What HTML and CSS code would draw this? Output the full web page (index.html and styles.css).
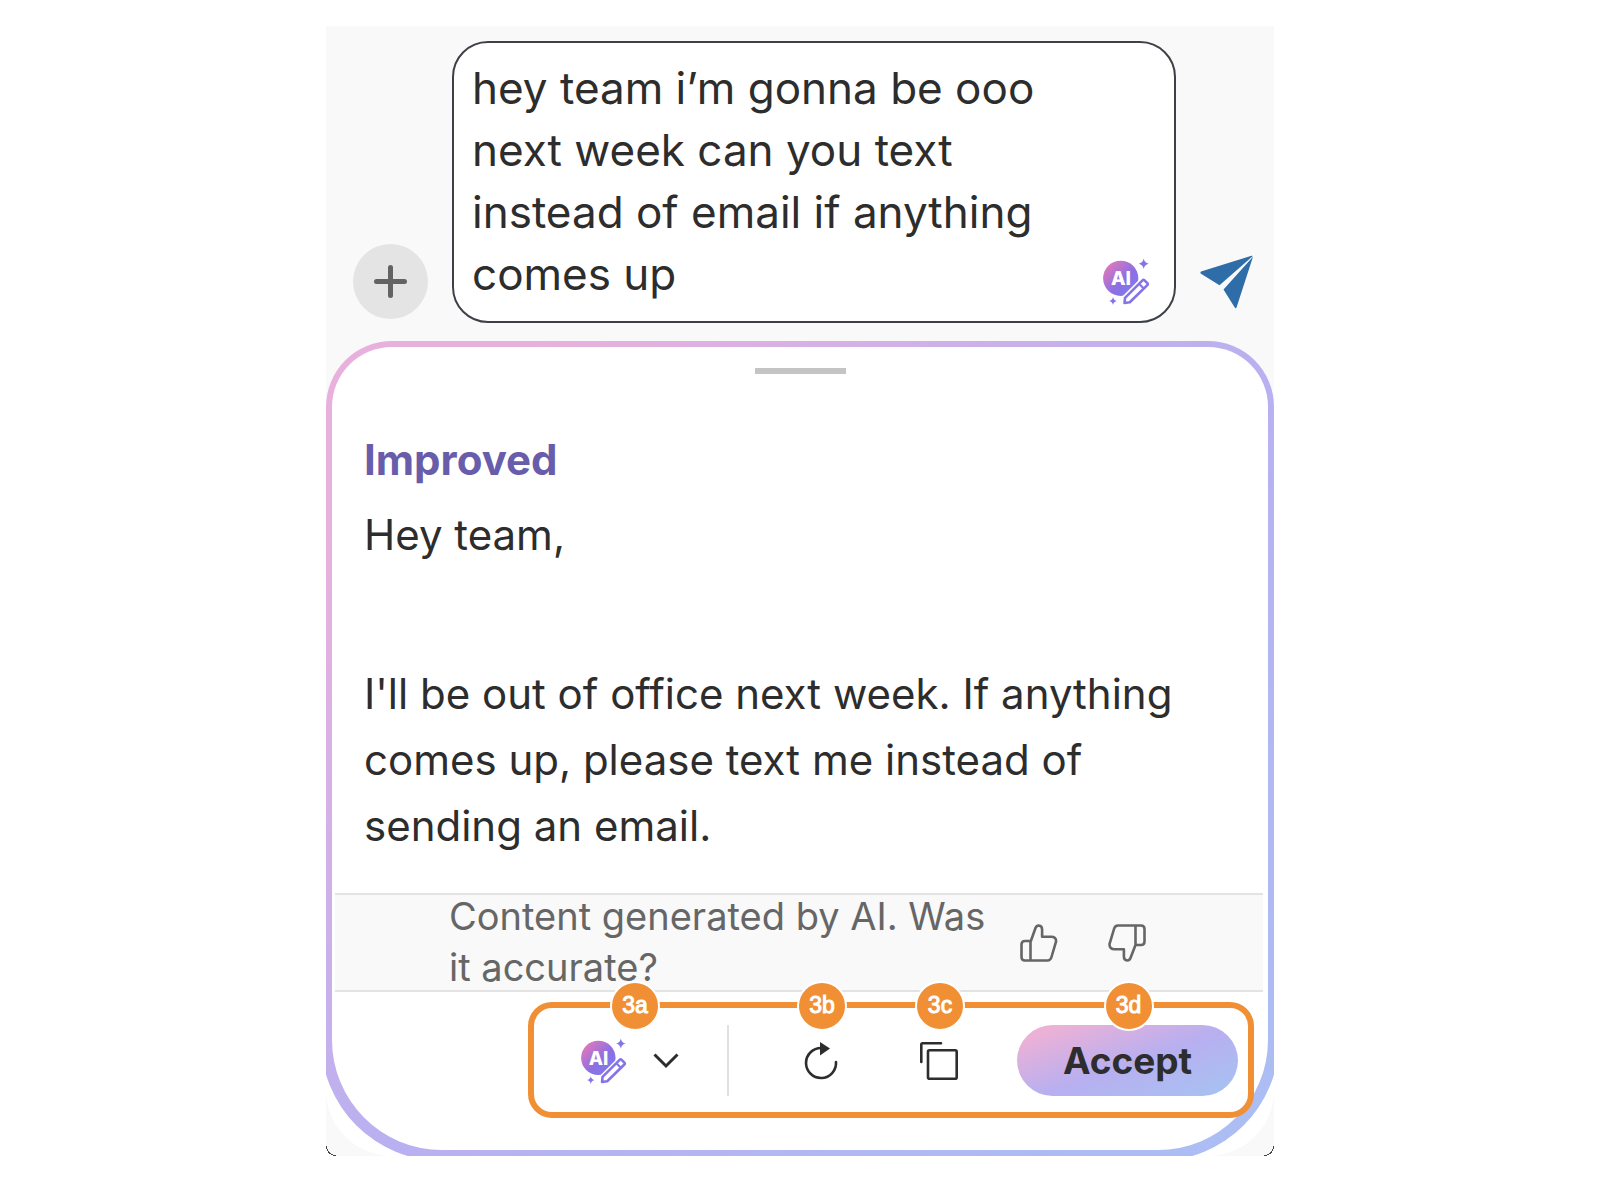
FILE: index.html
```html
<!DOCTYPE html>
<html lang="en">
<head>
    <meta charset="UTF-8">
    <title>AI Message Assistant</title>
    <link rel="stylesheet" href="styles.css">
</head>
<body>
    <!-- shared icon shapes -->
    <svg class="defs" width="0" height="0" aria-hidden="true">
        <defs>
            <linearGradient id="ai-gradient" gradientUnits="userSpaceOnUse" x1="4" y1="8" x2="32" y2="36">
                <stop offset="0" stop-color="#dc78bd"/>
                <stop offset="0.55" stop-color="#8d6fe3"/>
                <stop offset="1" stop-color="#7b7cf0"/>
            </linearGradient>
            <symbol id="ai-icon" viewBox="0 0 47 47">
                <circle cx="17.7" cy="20.3" r="17.6" fill="url(#ai-gradient)"/>
                <path d="M22 39.8 39.5 22.3q1-1 2 0l2.8 2.8q1 1 0 2L26.8 44.2l-5.3.8z" fill="#fff" stroke="#fff" stroke-width="5.5" stroke-linejoin="round"/>
                <text class="ai-text" x="18" y="27.2" text-anchor="middle">AI</text>
                <path d="M22 39.8 39.5 22.3q1-1 2 0l2.8 2.8q1 1 0 2L26.8 44.2l-5.3.8z" fill="#fff" stroke="#8574e8" stroke-width="2.6" stroke-linejoin="round"/>
                <path d="M35.8 25.5l5.2 5.2" stroke="#8574e8" stroke-width="2.2" fill="none"/>
                <path d="M40.7.5q.8 4.4 5 5.2-4.2.8-5 5.2-.8-4.4-5-5.2 4.2-.8 5-5.2z" fill="#8574e8"/>
                <path d="M10 39q.6 3.3 4 4-3.4.7-4 4-.6-3.3-4-4 3.4-.7 4-4z" fill="#8574e8"/>
            </symbol>
        </defs>
    </svg>

    <main class="card">
        <form class="composer">
            <button type="button" class="add-button" aria-label="Add attachment">
                <svg width="33" height="33" viewBox="0 0 33 33"><path d="M16.5 2.5v28M2.5 16.5h28" stroke="#636363" stroke-width="5" stroke-linecap="round"/></svg>
            </button>
            <div class="message-box">
                <textarea class="message" rows="4" aria-label="Message">hey team i’m gonna be ooo next week can you text instead of email if anything comes up</textarea>
                <button type="button" class="ai-button" aria-label="Rewrite with AI">
                    <svg width="47" height="47"><use href="#ai-icon"/></svg>
                </button>
            </div>
            <button type="submit" class="send-button" aria-label="Send">
                <svg width="54" height="54" viewBox="0 0 54 54"><path d="M1 16.6 51.5.8q1.5-.2.8.8L19.5 30.2 1 18.8q-1.2-1.2 0-2.2zM53 1.8 36.6 52.3q-.9 1.8-2 0L23.5 34.6z" fill="#2e6da8"/></svg>
            </button>
        </form>

        <section class="sheet">
            <div class="sheet-frame">
                <div class="sheet-body">
                    <div class="handle"></div>
                    <div class="result">
                        <h2>Improved</h2>
                        <p>Hey team,</p>
                        <p>I'll be out of office next week. If anything comes up, please text me instead of sending an email.</p>
                    </div>

                    <div class="feedback">
                        <p>Content generated by AI. Was it accurate?</p>
                        <button type="button" aria-label="Yes, accurate">
                            <svg width="38" height="38" viewBox="0 0 38 38"><path d="M10.5 36.5V18L15.5 4q1-2.5 3.3-2.5 3.300.3 3.3 4v7.300h9q5 0 5 4.5l-4.6 15.7q-1 3.5-4 3.5zM10.5 17H5q-3.5 0-3.5 3.5V33q0 3.5 3.5 3.5h5.5"/></svg>
                        </button>
                        <button type="button" aria-label="No, not accurate">
                            <svg width="38" height="38" viewBox="0 0 38 38"><path d="M27.5 1.5V21L22.5 34q-1 2.5-3.3 2.5-3.3-.3-3.3-4v-7.3h-9q-5.4 0-5.4-5L6 5q1-3.5 4-3.5zM27.5 21H33q3.5 0 3.5-3.5V5q0-3.5-3.5-3.5h-5.5"/></svg>
                        </button>
                    </div>

                    <div class="toolbar">
                        <button type="button" class="tool tool-ai" aria-label="AI options">
                            <span class="badge">3a</span>
                            <svg width="46" height="46"><use href="#ai-icon"/></svg>
                            <svg width="26" height="16" viewBox="0 0 26 16"><path d="M1.5 1.5 13 13 24.5 1.5" fill="none" stroke="#2d2d2d" stroke-width="3"/></svg>
                        </button>
                        <span class="divider"></span>
                        <button type="button" class="tool" aria-label="Regenerate">
                            <span class="badge">3b</span>
                            <svg width="34" height="38" viewBox="0 0 34 38"><path d="M17.5 6A15 15 0 1 0 32 20" fill="none" stroke="#2d2d2d" stroke-width="2.6" stroke-linecap="round"/><path d="M16 0 26 6.500 16 13.500z" fill="#2d2d2d"/></svg>
                        </button>
                        <button type="button" class="tool" aria-label="Copy">
                            <span class="badge">3c</span>
                            <svg width="38" height="38" viewBox="0 0 38 38"><path d="M1.3 20V2.500q0-1.200 1.200-1.200H21" fill="none" stroke="#2d2d2d" stroke-width="2.6" stroke-linecap="round"/><rect x="8" y="8.3" width="28.7" height="28.4" rx="1.5" fill="none" stroke="#2d2d2d" stroke-width="2.6"/></svg>
                        </button>
                        <button type="button" class="tool accept">
                            <span class="badge">3d</span>
                            Accept
                        </button>
                    </div>
                </div>
            </div>
        </section>
    </main>
</body>
</html>
```
FILE: styles.css
```css
* {
    box-sizing: border-box;
}
body {
    margin: 0;
    padding: 26px 0;
    background-color: #fff;
    color: #2d2d2d;
    font-family: Inter, "Liberation Sans", sans-serif;
}
h2, p {
    margin: 0;
}
button {
    padding: 0;
    border: none;
    background: none;
    color: inherit;
    font-family: inherit;
    cursor: pointer;
}
svg {
    display: block;
    flex: none;
}
.defs {
    position: absolute;
}
.ai-text {
    font-size: 19px;
    font-weight: 800;
    fill: #fff;
}
.card {
    position: relative;
    width: 60%;
    max-width: 948px;
    margin: 0 auto;
    padding-top: 15px;
    background-color: #f9f9f9;
}
/* thin dark line round the two lower corners */
.card::after {
    content: "";
    position: absolute;
    left: 0;
    right: 0;
    bottom: 0;
    height: 10px;
    background:
        radial-gradient(circle at 10px 0, transparent 9px, #444 9px, #444 10px, #fff 10px) left / 10px 10px no-repeat,
        radial-gradient(circle at 0 0, transparent 9px, #444 9px, #444 10px, #fff 10px) right / 10px 10px no-repeat;
}

/* message row */
.composer {
    display: flex;
    align-items: flex-end;
    gap: 24px;
    padding: 0 20px 0 27px;
}
.add-button {
    display: flex;
    align-items: center;
    justify-content: center;
    flex: none;
    width: 75px;
    height: 75px;
    margin-bottom: 4px;
    border-radius: 50%;
    background-color: #e4e4e4;
}
.message-box {
    display: flex;
    align-items: flex-end;
    flex: 1;
    padding: 14px 24px 16px 18px;
    border: 2px solid #3d4147;
    border-radius: 36px;
    background-color: #fff;
}
.message {
    flex: 1;
    min-width: 0;
    padding: 0;
    border: none;
    outline: none;
    resize: none;
    overflow: hidden;
    background: none;
    color: inherit;
    font-family: inherit;
    font-size: 44px;
    line-height: 62px;
}
.send-button {
    margin-bottom: 14px;
}

/* result sheet */
.sheet {
    margin-top: 18px;
    border-radius: 66px;
    overflow: hidden;
    background-color: #fff;
}
.sheet-frame {
    margin: 0 -5px -5px;
    padding: 6px 11px 11px;
    border-radius: 0 0 121px 121px;
    background: linear-gradient(138deg, #e8b1dd 12%, #b9b0f1 51%, #aabff3 100%);
}
.sheet-body {
    padding: 21px 0 32px;
    border-radius: 60px 60px 110px 110px;
    background-color: #fff;
}
.handle {
    width: 91px;
    height: 6px;
    margin: 0 auto;
    background-color: #c4c4c4;
}
.result {
    padding: 53px 60px 34px 32px;
    font-size: 42px;
    line-height: 66px;
}
.result h2 {
    color: #685dab;
    font-size: 42px;
    font-weight: 700;
}
.result p {
    margin-top: 9px;
}
.result p + p {
    margin-top: 93px;
}
.feedback {
    display: flex;
    align-items: center;
    margin: 0 5px 0 3px;
    padding: 0 117px 0 114px;
    border-top: 2px solid #e3e3e3;
    border-bottom: 2px solid #e3e3e3;
    background-color: #f9f9f9;
    color: #666;
    font-size: 38px;
    line-height: 51px;
}
.feedback p {
    flex: 1;
    margin: -4px 0 -3px;
}
.feedback button {
    margin-left: 50px;
}
.feedback p + button {
    margin-left: 20px;
}
.feedback path {
    fill: none;
    stroke: #666;
    stroke-width: 2.6;
    stroke-linejoin: round;
}

/* toolbar */
.toolbar {
    display: flex;
    align-items: center;
    width: fit-content;
    margin: 10px 14px 0 auto;
    padding: 17px 10px 16px 47px;
    border: 6px solid #f08f34;
    border-radius: 24px;
}
.tool {
    position: relative;
    display: flex;
    align-items: center;
    justify-content: center;
    width: 118px;
    height: 71px;
}
.tool-ai {
    justify-content: flex-start;
    gap: 26px;
    width: 106px;
}
.divider {
    width: 2px;
    height: 71px;
    margin: 0 33px 0 40px;
    background-color: #e0e0e0;
}
.accept {
    width: 221px;
    margin-left: 19px;
    border-radius: 36px;
    background: linear-gradient(160deg, #edb1d6 10%, #b8aff0 52%, #a9bff2 90%);
    font-size: 37px;
    font-weight: 700;
}
.badge {
    position: absolute;
    top: -44px;
    left: 50%;
    width: 50px;
    height: 50px;
    margin-left: -24px;
    border: 2px solid #fff;
    border-radius: 50%;
    background-color: #f08f34;
    color: #fff;
    font-family: "Liberation Sans", Arial, sans-serif;
    font-size: 23px;
    font-weight: 400;
    line-height: 44px;
    text-align: center;
    -webkit-text-stroke: 1px #fff;
}
```
